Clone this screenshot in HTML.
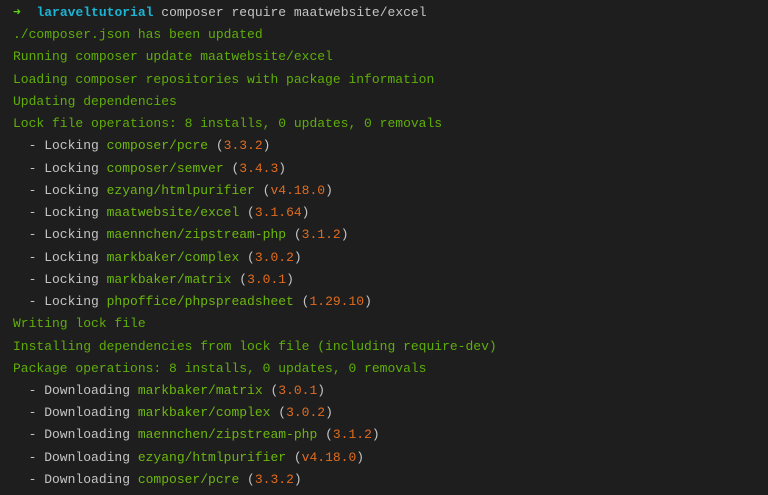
<!DOCTYPE html>
<html><head><meta charset="utf-8"><style>
html,body{margin:0;padding:0;background:#1e1e1e;width:768px;height:495px;overflow:hidden}
pre{margin:0;padding:2px 0 0 13px;font-family:"Liberation Mono","DejaVu Sans Mono",monospace;font-size:13px;line-height:22.24px;color:#5fae0a;white-space:pre}
.w{color:#c4c4c4}.c{color:#1cb4d4;font-weight:bold}.a{color:#5fd31a;font-weight:bold}.o{color:#e06c1e}.g{color:#6cb80e}
</style></head><body><pre><span class="a">➜</span>  <span class="c">laraveltutorial</span> <span class="w">composer require maatwebsite/excel</span>
./composer.json has been updated
Running composer update maatwebsite/excel
Loading composer repositories with package information
Updating dependencies
Lock file operations: 8 installs, 0 updates, 0 removals
<span class="w">  - Locking </span><span class="g">composer/pcre</span><span class="w"> (</span><span class="o">3.3.2</span><span class="w">)</span>
<span class="w">  - Locking </span><span class="g">composer/semver</span><span class="w"> (</span><span class="o">3.4.3</span><span class="w">)</span>
<span class="w">  - Locking </span><span class="g">ezyang/htmlpurifier</span><span class="w"> (</span><span class="o">v4.18.0</span><span class="w">)</span>
<span class="w">  - Locking </span><span class="g">maatwebsite/excel</span><span class="w"> (</span><span class="o">3.1.64</span><span class="w">)</span>
<span class="w">  - Locking </span><span class="g">maennchen/zipstream-php</span><span class="w"> (</span><span class="o">3.1.2</span><span class="w">)</span>
<span class="w">  - Locking </span><span class="g">markbaker/complex</span><span class="w"> (</span><span class="o">3.0.2</span><span class="w">)</span>
<span class="w">  - Locking </span><span class="g">markbaker/matrix</span><span class="w"> (</span><span class="o">3.0.1</span><span class="w">)</span>
<span class="w">  - Locking </span><span class="g">phpoffice/phpspreadsheet</span><span class="w"> (</span><span class="o">1.29.10</span><span class="w">)</span>
Writing lock file
Installing dependencies from lock file (including require-dev)
Package operations: 8 installs, 0 updates, 0 removals
<span class="w">  - Downloading </span><span class="g">markbaker/matrix</span><span class="w"> (</span><span class="o">3.0.1</span><span class="w">)</span>
<span class="w">  - Downloading </span><span class="g">markbaker/complex</span><span class="w"> (</span><span class="o">3.0.2</span><span class="w">)</span>
<span class="w">  - Downloading </span><span class="g">maennchen/zipstream-php</span><span class="w"> (</span><span class="o">3.1.2</span><span class="w">)</span>
<span class="w">  - Downloading </span><span class="g">ezyang/htmlpurifier</span><span class="w"> (</span><span class="o">v4.18.0</span><span class="w">)</span>
<span class="w">  - Downloading </span><span class="g">composer/pcre</span><span class="w"> (</span><span class="o">3.3.2</span><span class="w">)</span></pre></body></html>
